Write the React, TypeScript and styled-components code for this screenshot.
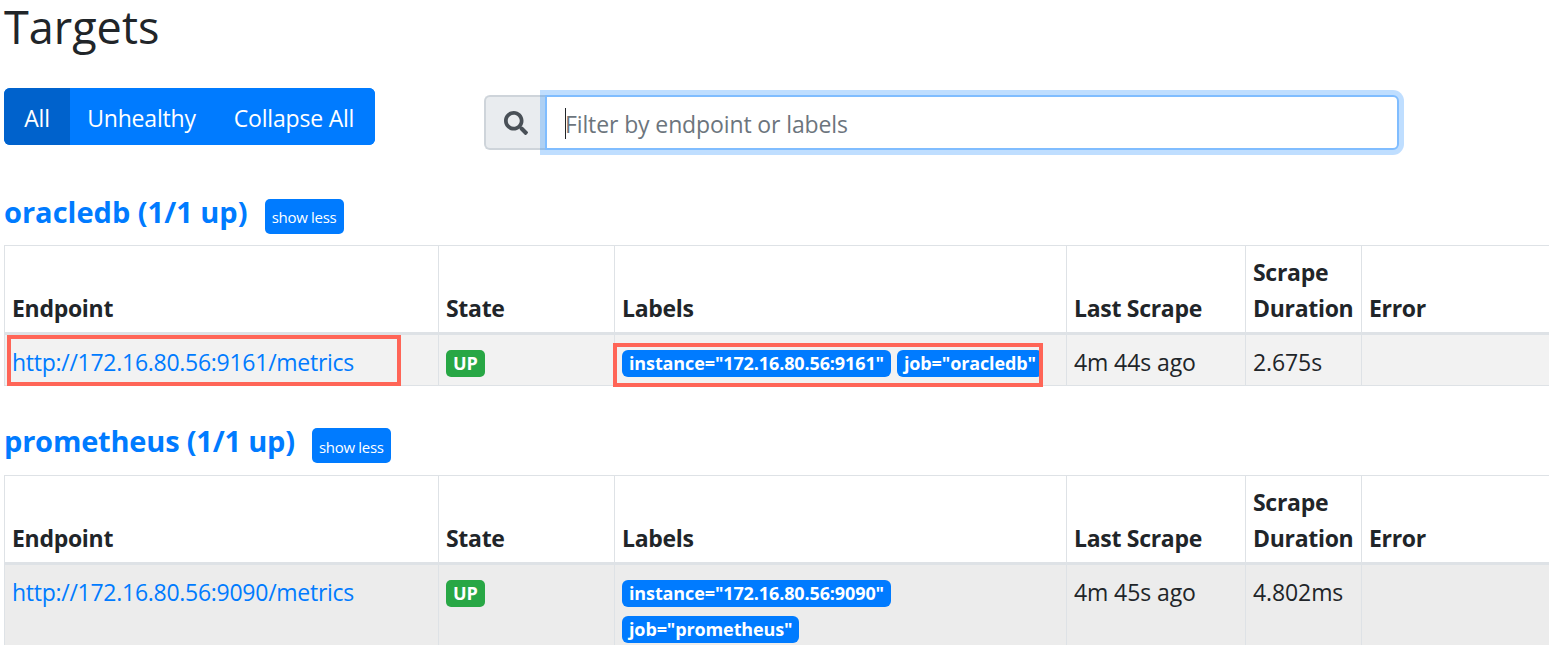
import React from "react";
import styled, { createGlobalStyle } from "styled-components";
import { FaSearch } from "react-icons/fa";

const GlobalStyle = createGlobalStyle`
  html, body {
    margin: 0;
    padding: 0;
    height: 100%;
    overflow: hidden;
    background: #fff;
  }
  body {
    font-family: "Open Sans", "Noto Sans", "Liberation Sans", sans-serif;
    font-size: 23px;
    color: #212529;
  }
`;

const Page = styled.div`
  width: 1549px;
  height: 645px;
  padding-left: 4px;
  box-sizing: border-box;
  overflow: hidden;
`;

const Title = styled.h1`
  margin: 0;
  height: 88px;
  font-size: 45px;
  font-weight: 400;
  line-height: 54px;
`;

const Toolbar = styled.div`
  display: flex;
  align-items: flex-start;
  height: 111px;
`;

const ButtonGroup = styled.div`
  display: flex;
  width: 371px;
  height: 57px;
  border-radius: 6px;
  overflow: hidden;
  background: #007bff;
`;

const GroupButton = styled.button<{ $active?: boolean; $width: number }>`
  width: ${(p) => p.$width}px;
  border: 0;
  padding: 2px 0 0;
  background: ${(p) => (p.$active ? "#0062cc" : "#007bff")};
  color: #fff;
  font: inherit;
  letter-spacing: -0.2px;
`;

const SearchGroup = styled.div`
  display: flex;
  width: 915px;
  height: 55px;
  margin: 7px 0 0 109px;
`;

const SearchPrepend = styled.div`
  display: flex;
  align-items: center;
  justify-content: center;
  width: 61px;
  box-sizing: border-box;
  background: #e9ecef;
  border: 2px solid #ced4da;
  border-right: 0;
  border-radius: 6px 0 0 6px;
  color: #495057;
  font-size: 24px;
`;

const InputWrap = styled.div`
  position: relative;
  flex: 1;
  display: flex;
`;

const SearchInput = styled.input`
  flex: 1;
  min-width: 0;
  box-sizing: border-box;
  padding: 2px 18px 0;
  border: 2px solid #80bdff;
  border-radius: 0 6px 6px 0;
  box-shadow: 0 0 0 5px rgba(0, 123, 255, 0.25);
  outline: 0;
  font: inherit;
  letter-spacing: -0.12px;
  color: #495057;
  &::placeholder {
    color: #6c757d;
    opacity: 1;
  }
`;

const Caret = styled.span`
  position: absolute;
  left: 20px;
  top: 13px;
  width: 1px;
  height: 31px;
  background: #212529;
`;

const SectionHeader = styled.div`
  display: flex;
  align-items: flex-start;
  height: 46.4px;
`;

const JobLink = styled.a<{ $tracking: number }>`
  color: #007bff;
  font-size: 29px;
  font-weight: 700;
  line-height: 25px;
  letter-spacing: ${(p) => p.$tracking}px;
  text-decoration: none;
`;

const ShowLess = styled.button`
  height: 34.5px;
  width: 79px;
  margin-left: 17px;
  padding: 2px 0 0;
  border: 0;
  border-radius: 5px;
  background: #007bff;
  color: #fff;
  font: inherit;
  font-size: 15px;
  letter-spacing: -0.3px;
`;

const Table = styled.table`
  width: 1600px;
  table-layout: fixed;
  border-collapse: collapse;
  margin-bottom: 42px;
`;

const HeadCell = styled.th<{ $width: number }>`
  box-sizing: border-box;
  width: ${(p) => p.$width}px;
  padding: 7px 7px 6px;
  border: 1px solid #dee2e6;
  border-bottom: 3px solid #dee2e6;
  height: 88px;
  vertical-align: bottom;
  text-align: left;
  font-weight: 700;
  font-size: 23px;
  line-height: 36px;
  letter-spacing: -0.3px;
`;

const Row = styled.tr<{ $bg: string }>`
  background: ${(p) => p.$bg};
`;

const Cell = styled.td`
  position: relative;
  padding: 10px 7px 4px;
  border: 1px solid #dee2e6;
  vertical-align: top;
  line-height: 35px;
  letter-spacing: -0.1px;
`;

const EndpointLink = styled.a`
  color: #007bff;
  text-decoration: none;
  letter-spacing: -0.27px;
`;

const StateBadge = styled.span`
  display: block;
  width: fit-content;
  height: 27px;
  margin-top: 5px;
  padding: 0 7px;
  border-radius: 5px;
  background: #28a745;
  color: #fff;
  font-size: 18px;
  font-weight: 700;
  line-height: 27px;
`;

const LabelBadge = styled.span`
  display: inline-block;
  height: 27px;
  padding: 0 7px;
  margin: 5px 6px 4px 0;
  border-radius: 6px;
  background: #007bff;
  color: #fff;
  font-size: 18px;
  font-weight: 700;
  line-height: 27px;
  letter-spacing: -0.12px;
  white-space: nowrap;
`;

const LabelList = styled.div`
  display: flex;
  flex-wrap: wrap;
`;

/* red boxes someone drew on top of the screenshot */
const Highlight = styled.span<{ $left: number; $top: number; $width: number; $height: number }>`
  position: absolute;
  left: ${(p) => p.$left}px;
  top: ${(p) => p.$top}px;
  width: ${(p) => p.$width}px;
  height: ${(p) => p.$height}px;
  box-sizing: border-box;
  border: 4px solid #ff6557;
  pointer-events: none;
`;

const columns = [
  { name: "Endpoint", width: 434 },
  { name: "State", width: 176 },
  { name: "Labels", width: 452 },
  { name: "Last Scrape", width: 179 },
  { name: "Scrape Duration", width: 116 },
  { name: "Error", width: 243 },
];

interface Target {
  job: string;
  tracking: number;
  endpoint: string;
  labels: string[];
  lastScrape: string;
  duration: string;
  bg: string;
  marked?: boolean;
}

const targets: Target[] = [
  {
    job: "oracledb",
    tracking: 0,
    endpoint: "http://172.16.80.56:9161/metrics",
    labels: ['instance="172.16.80.56:9161"', 'job="oracledb"'],
    lastScrape: "4m 44s ago",
    duration: "2.675s",
    bg: "#f2f2f2",
    marked: true,
  },
  {
    job: "prometheus",
    tracking: -0.2,
    endpoint: "http://172.16.80.56:9090/metrics",
    labels: ['instance="172.16.80.56:9090"', 'job="prometheus"'],
    lastScrape: "4m 45s ago",
    duration: "4.802ms",
    bg: "#ececec",
  },
];

function App() {
  return (
    <>
      <GlobalStyle />
      <Page>
        <Title>Targets</Title>
        <Toolbar>
          <ButtonGroup>
            <GroupButton $active $width={66}>All</GroupButton>
            <GroupButton $width={143}>Unhealthy</GroupButton>
            <GroupButton $width={162}>Collapse All</GroupButton>
          </ButtonGroup>
          <SearchGroup>
            <SearchPrepend>
              <FaSearch />
            </SearchPrepend>
            <InputWrap>
              <SearchInput placeholder="Filter by endpoint or labels" />
              <Caret />
            </InputWrap>
          </SearchGroup>
        </Toolbar>
        {targets.map((t) => (
          <section key={t.job}>
            <SectionHeader>
              <JobLink href="#" $tracking={t.tracking}>{t.job} (1/1 up)</JobLink>
              <ShowLess>show less</ShowLess>
            </SectionHeader>
            <Table>
              <thead>
                <tr>
                  {columns.map((c) => (
                    <HeadCell key={c.name} $width={c.width}>{c.name}</HeadCell>
                  ))}
                </tr>
              </thead>
              <tbody>
                <Row $bg={t.bg}>
                  <Cell>
                    <EndpointLink href="#">{t.endpoint}</EndpointLink>
                    {t.marked && <Highlight $left={2} $top={0} $width={394} $height={51} />}
                  </Cell>
                  <Cell>
                    <StateBadge>UP</StateBadge>
                  </Cell>
                  <Cell>
                    <LabelList>
                      {t.labels.map((l) => (
                        <LabelBadge key={l}>{l}</LabelBadge>
                      ))}
                    </LabelList>
                    {t.marked && <Highlight $left={-2} $top={8} $width={430} $height={44} />}
                  </Cell>
                  <Cell>{t.lastScrape}</Cell>
                  <Cell>{t.duration}</Cell>
                  <Cell />
                </Row>
              </tbody>
            </Table>
          </section>
        ))}
      </Page>
    </>
  );
}

export default App;
